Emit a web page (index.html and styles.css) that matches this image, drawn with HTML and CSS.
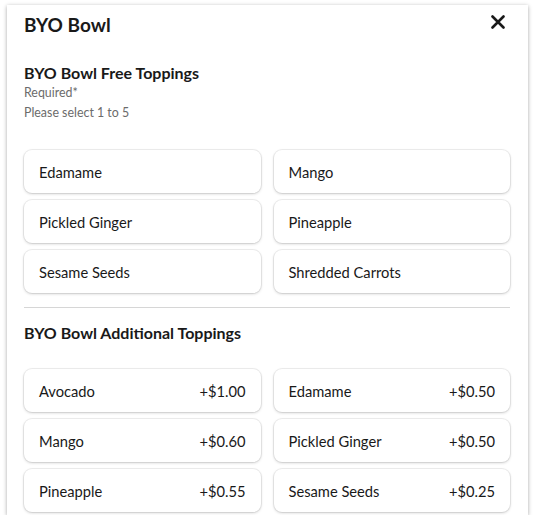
FILE: index.html
```html
<!DOCTYPE html>
<html>
<head>
<meta charset="utf-8">
<link rel="stylesheet" href="styles.css">
</head>
<body>
<div class="modal">
  <div class="header">
    <h1 class="title">BYO Bowl</h1>
    <button class="close" aria-label="Close">
      <svg width="14" height="14" viewBox="0 0 14 14"><path d="M1.5 1.5L12.5 12.5M12.5 1.5L1.5 12.5" stroke="#191919" stroke-width="2.6" stroke-linecap="round"/></svg>
    </button>
  </div>
  <section class="group">
    <h2 class="group-title">BYO Bowl Free Toppings</h2>
    <div class="meta">Required*</div>
    <div class="meta">Please select 1 to 5</div>
    <div class="options">
      <div class="option"><span>Edamame</span></div>
      <div class="option"><span>Mango</span></div>
      <div class="option"><span>Pickled Ginger</span></div>
      <div class="option"><span>Pineapple</span></div>
      <div class="option"><span>Sesame Seeds</span></div>
      <div class="option"><span>Shredded Carrots</span></div>
    </div>
  </section>
  <hr class="divider">
  <section class="group group-2">
    <h2 class="group-title">BYO Bowl Additional Toppings</h2>
    <div class="options options-2">
      <div class="option"><span>Avocado</span><span>+$1.00</span></div>
      <div class="option"><span>Edamame</span><span>+$0.50</span></div>
      <div class="option"><span>Mango</span><span>+$0.60</span></div>
      <div class="option"><span>Pickled Ginger</span><span>+$0.50</span></div>
      <div class="option"><span>Pineapple</span><span>+$0.55</span></div>
      <div class="option"><span>Sesame Seeds</span><span>+$0.25</span></div>
    </div>
  </section>
</div>
</body>
</html>
```
FILE: styles.css
```css
html, body {
  margin: 0;
  padding: 0;
  background: #ffffff;
}
body {
  font-family: "Lato", "Liberation Sans", sans-serif;
  color: #191919;
}
.modal {
  box-sizing: border-box;
  margin: 5px 0 0 7px;
  width: 521px;
  height: 510px;
  overflow: hidden;
  background: #fff;
  box-shadow: 0 1px 4px rgba(0, 0, 0, 0.35);
  padding: 8px 18px 0 17px;
}
.header {
  display: flex;
  justify-content: space-between;
  align-items: flex-start;
}
.title {
  margin: 0;
  font-size: 19px;
  line-height: 24px;
  font-weight: 700;
}
.close {
  border: 0;
  background: none;
  padding: 0;
  margin: 2px 5px 0 0;
  width: 14px;
  height: 14px;
  display: flex;
}
.group-title {
  margin: 26px 0 0;
  font-size: 16px;
  line-height: 20px;
  font-weight: 700;
}
.meta {
  font-size: 12.4px;
  line-height: 20px;
  color: #6b6b6b;
}
.options {
  margin-top: 27px;
  display: grid;
  grid-template-columns: 1fr 1fr;
  column-gap: 13px;
  row-gap: 7px;
}
.options-2 {
  margin-top: 26px;
}
.option {
  height: 43px;
  box-sizing: border-box;
  border-radius: 8px;
  background: #fff;
  box-shadow: 0 0 0 1px rgba(0, 0, 0, 0.06), 0 1px 3px rgba(0, 0, 0, 0.18);
  display: flex;
  align-items: center;
  justify-content: space-between;
  padding: 0 15px;
  font-size: 14.7px;
}
.divider {
  margin: 14px 0 0;
  border: 0;
  border-top: 1px solid #d6d6d6;
}
.group-2 .group-title {
  margin-top: 15px;
}
```
